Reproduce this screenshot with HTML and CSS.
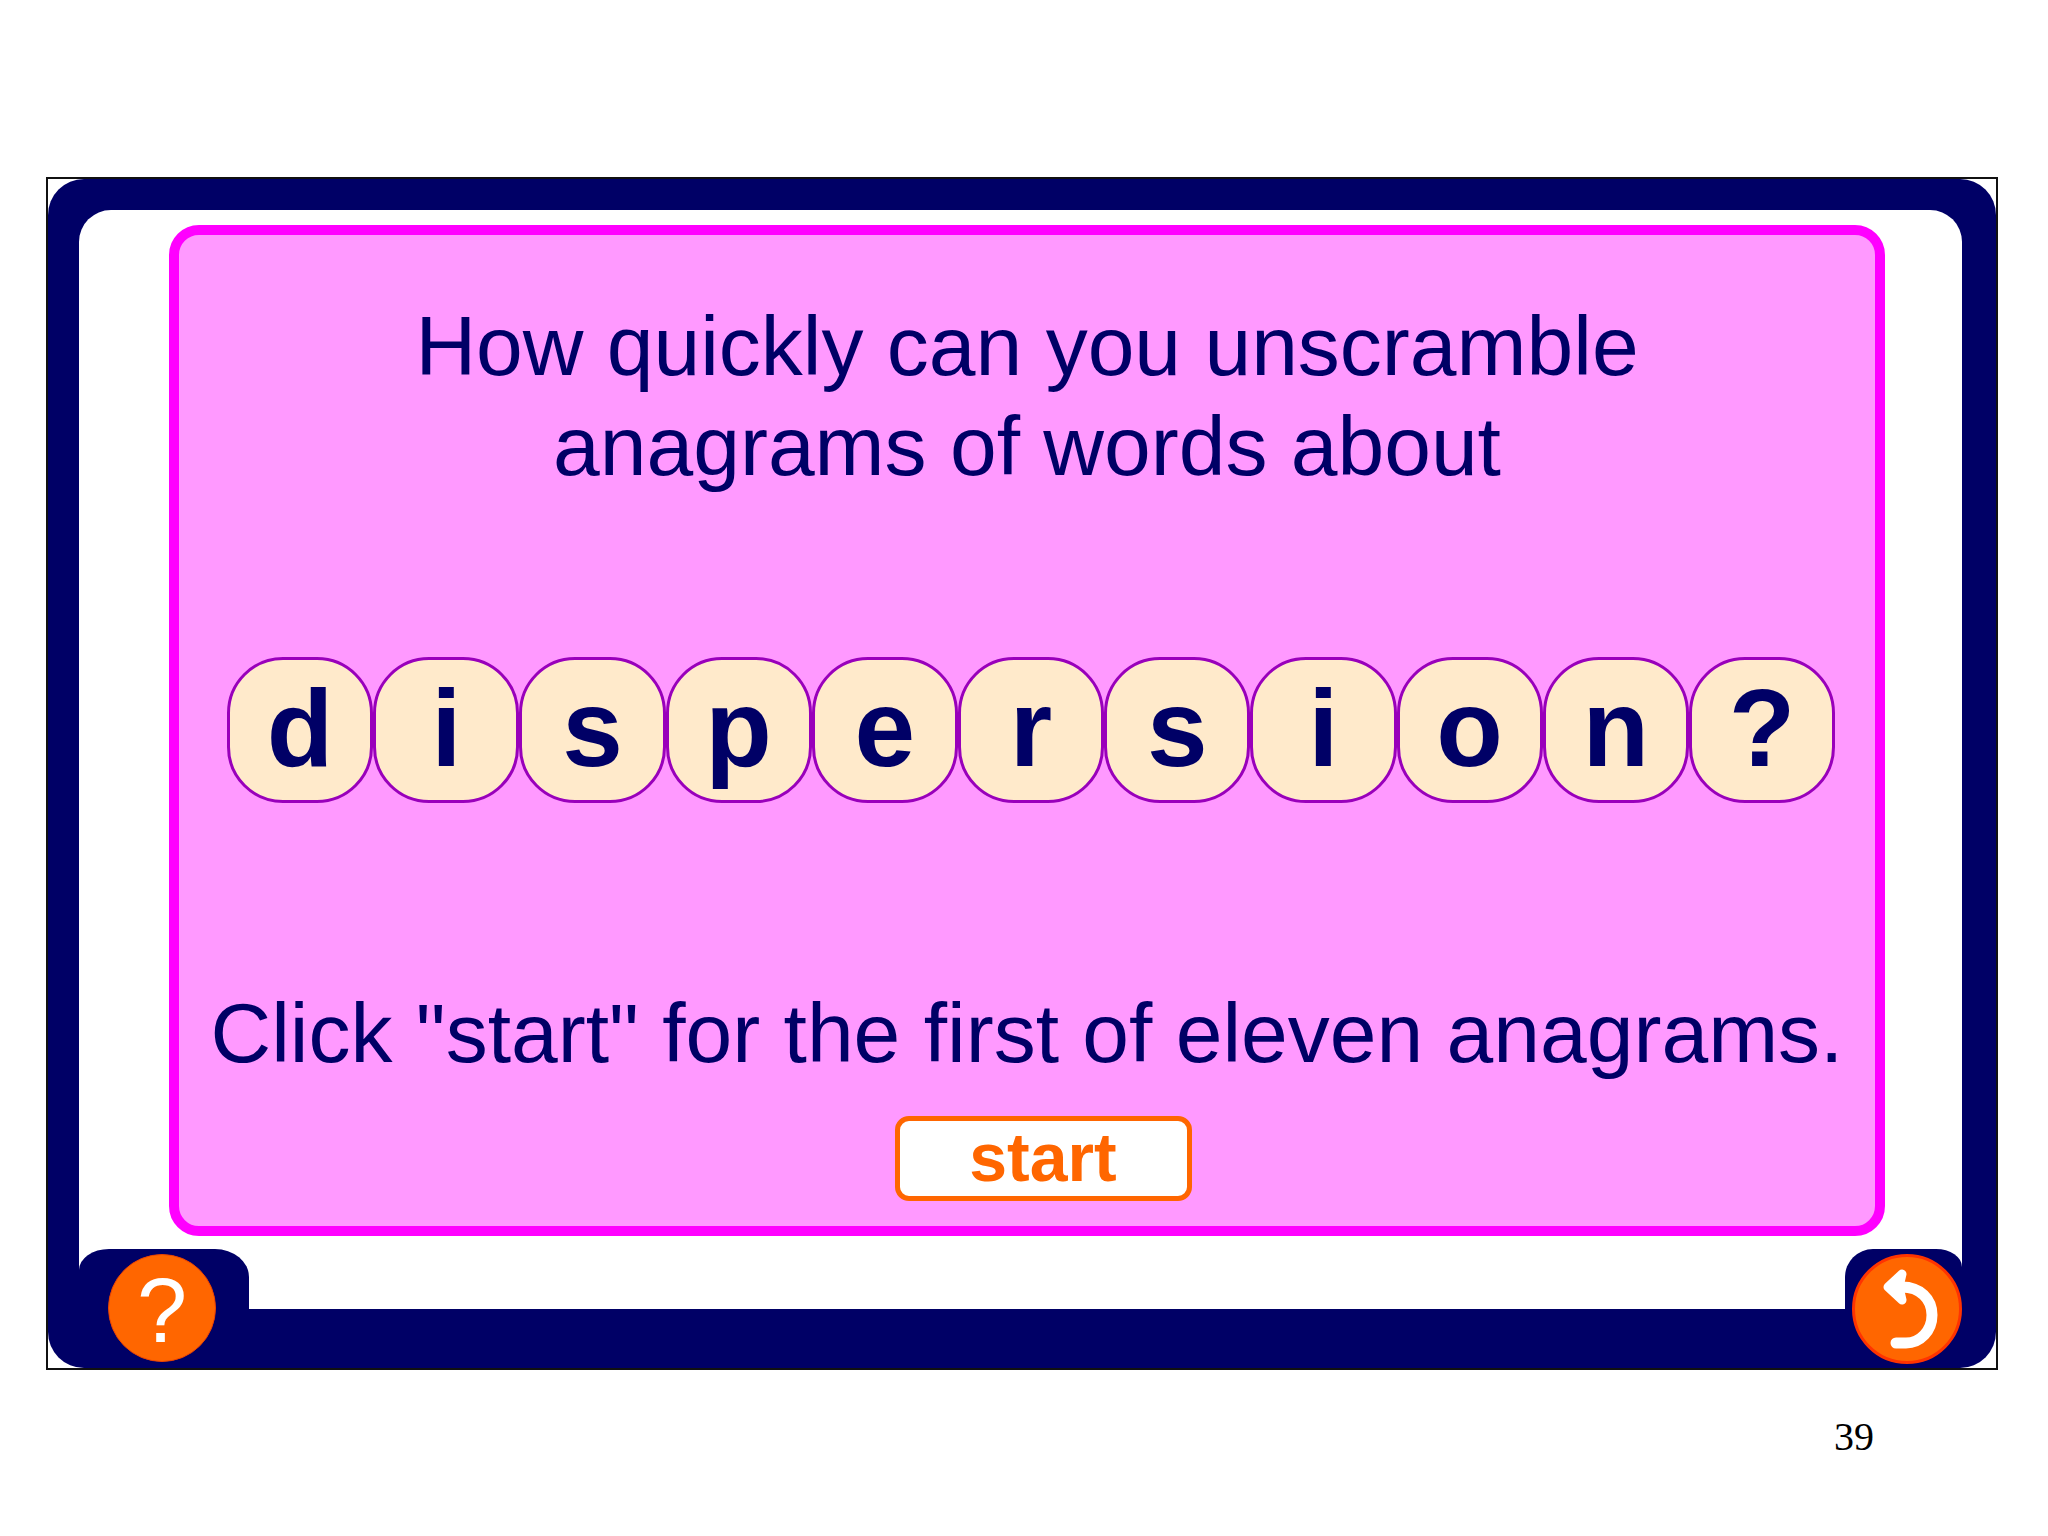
FILE: index.html
```html
<!DOCTYPE html>
<html lang="en">
  <head>
    <meta charset="UTF-8" />
    <meta name="viewport" content="width=device-width, initial-scale=1.0" />
    <title>Anagrams - dispersion</title>
    <link rel="stylesheet" href="styles.css">
  </head>
  <body>
    <main class="frame">
      <div class="bezel">
        <div class="stage">
          <section class="panel">
            <p class="text">
              How quickly can you unscramble<br />
              anagrams of words about
            </p>
            <div class="tiles">
              <span class="tile">d</span>
              <span class="tile">i</span>
              <span class="tile">s</span>
              <span class="tile">p</span>
              <span class="tile">e</span>
              <span class="tile">r</span>
              <span class="tile">s</span>
              <span class="tile">i</span>
              <span class="tile">o</span>
              <span class="tile">n</span>
              <span class="tile">?</span>
            </div>
            <p class="text">Click "start" for the first of eleven anagrams.</p>
            <button type="button" class="start">start</button>
          </section>
          <nav class="tabs">
            <div class="tab tab-help">
              <button type="button" class="round help">?</button>
            </div>
            <div class="tab tab-back">
              <button type="button" class="round back" aria-label="Back">
                <svg viewBox="0 0 110 110" aria-hidden="true">
                  <path
                    d="M50 33 C68 33 80 45 80 61 S68 89 54 89 H44"
                    fill="none"
                    stroke="#fff"
                    stroke-width="11"
                    stroke-linecap="round"
                  />
                  <path
                    d="M36 33 L50 20 L47 33 L50 46 Z"
                    fill="#fff"
                    stroke="#fff"
                    stroke-width="9"
                    stroke-linejoin="round"
                  />
                </svg>
              </button>
            </div>
          </nav>
        </div>
      </div>
    </main>
    <footer class="page-number">39</footer>
  </body>
</html>
```
FILE: styles.css
```css
* {
  margin: 0;
  padding: 0;
  box-sizing: border-box;
}

body {
  background: #fff;
  color: #006;
  font-family: "Liberation Sans", Arial, sans-serif;
}

.frame {
  margin: 177px 50px 0 46px;
  border: 2px solid #111;
}

.bezel {
  padding: 31px 34px 59px 31px;
  background: #006;
  border-radius: 36px;
}

.stage {
  background: #fff;
  border-radius: 32px 32px 0 0;
  padding-top: 15px;
}

.panel {
  display: flex;
  flex-direction: column;
  margin: 0 77px 13px 90px;
  padding: 61px 15px 25px;
  background: #f9f;
  border: 10px solid #f0f;
  border-radius: 30px;
}

.text {
  font-size: 84px;
  line-height: 100px;
  text-align: center;
}

.tiles {
  display: flex;
  margin: 161px 25px 180px 33px;
}

.tile {
  flex: 1;
  display: flex;
  justify-content: center;
  align-items: center;
  aspect-ratio: 1;
  padding-bottom: 4px;
  background: #ffeacb;
  border: 3px solid #90b;
  border-radius: 56px;
  font-size: 109px;
  font-weight: bold;
  line-height: 1;
}

.start {
  align-self: center;
  width: 297px;
  height: 85px;
  margin: 33px 0 0 32px;
  padding-bottom: 4px;
  background: #fff;
  border: 5px solid #f60;
  border-radius: 14px;
  color: #f60;
  font: bold 68px "Liberation Sans", Arial, sans-serif;
  line-height: 70px;
  cursor: pointer;
}

.tabs {
  display: flex;
  justify-content: space-between;
}

/* the round buttons hang out of the tabs into the bottom bar */
.tab {
  height: 60px;
  padding-top: 5px;
  background: #006;
}

.tab-help {
  width: 170px;
  padding-left: 29px;
  border-radius: 30px 34px 0 0 / 21px 28px 0 0;
}

.tab-back {
  width: 117px;
  padding-left: 7px;
  border-radius: 28px 26px 0 0 / 28px 18px 0 0;
}

.round {
  display: block;
  width: 108px;
  height: 108px;
  background: #f60;
  border: 1px solid #e40;
  border-radius: 50%;
  color: #fff;
  cursor: pointer;
}

.help {
  padding-top: 6px;
  font: 90px "Liberation Sans", Arial, sans-serif;
  line-height: 1;
}

.back {
  width: 110px;
  height: 110px;
  border: 3px solid #f30;
}

.back svg {
  display: block;
  width: 110px;
  height: 110px;
  margin: -3px;
}

.page-number {
  margin-top: 43px;
  padding-right: 174px;
  color: #000;
  font: 40px "Liberation Serif", "Times New Roman", serif;
  text-align: right;
}
```
